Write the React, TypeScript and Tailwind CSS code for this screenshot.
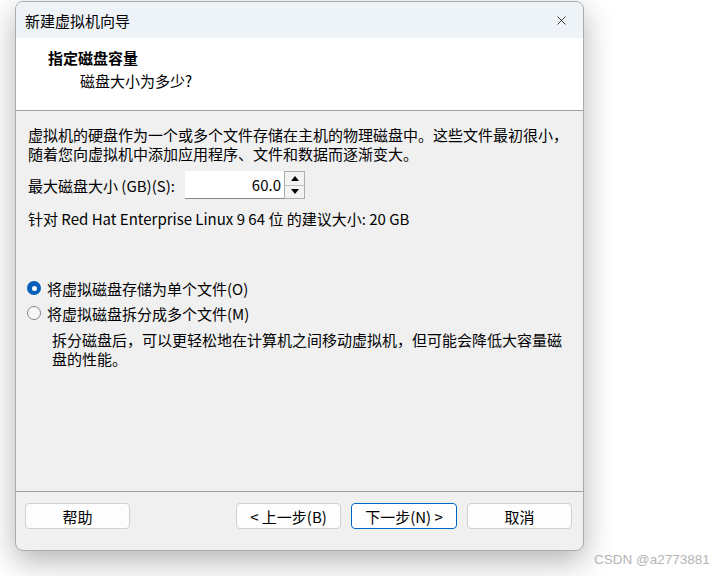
import { X } from 'lucide-react';

function Radio({ checked }: { checked: boolean }) {
  if (checked) {
    return (
      <span className="w-[14px] h-[14px] rounded-full bg-[#005fb8] flex items-center justify-center shrink-0">
        <span className="w-[5px] h-[5px] rounded-full bg-white" />
      </span>
    );
  }
  return <span className="w-[14px] h-[14px] rounded-full border border-[#858585] bg-[#f7f7f7] shrink-0" />;
}

function Button({ label, primary }: { label: string; primary?: boolean }) {
  return (
    <button
      className={`h-[26px] rounded-[4px] bg-[#fdfdfd] text-[15px] leading-none text-black flex items-center justify-center ${
        primary ? 'w-[106px] border border-[#0067c0]' : 'w-[105px] border border-[#d0d0d0]'
      }`}
    >
      {label}
    </button>
  );
}

export default function App() {
  return (
    <div className="relative w-[724px] h-[576px] bg-white overflow-hidden font-['Noto_Sans_CJK_SC','Noto_Sans',sans-serif] text-black">
      {/* Wizard window */}
      <div className="ml-[15px] mt-[1px] w-[569px] h-[550px] flex flex-col border border-[#ababab] rounded-[8px] overflow-hidden bg-[#f0f0f0] shadow-[0_10px_30px_rgba(0,0,0,0.3)]">
        {/* Title bar */}
        <div className="h-[36px] shrink-0 bg-[#eef3f8] flex items-center justify-between pl-[9px] pr-[14px]">
          <span className="text-[15px] leading-none">新建虚拟机向导</span>
          <X className="w-[15px] h-[15px] text-black" strokeWidth={1.2} />
        </div>

        {/* Header */}
        <div className="h-[72px] shrink-0 bg-white border-b border-[#a0a0a0] box-content">
          <div className="pl-[32px] pt-[10px] text-[15px] leading-[19px] font-bold">指定磁盘容量</div>
          <div className="pl-[64px] mt-[4px] text-[15px] leading-[19px]">磁盘大小为多少?</div>
        </div>

        {/* Content */}
        <div className="flex-1 pl-[12px] pt-[14px] text-[15px]">
          <p className="leading-[19px]">
            虚拟机的硬盘作为一个或多个文件存储在主机的物理磁盘中。这些文件最初很小，
            <br />
            随着您向虚拟机中添加应用程序、文件和数据而逐渐变大。
          </p>

          <div className="mt-[8px] flex items-center h-[28px]">
            <span className="w-[157px] leading-[19px]">最大磁盘大小 (GB)(S):</span>
            <div className="w-[99px] h-[28px] bg-white border-b border-[#868686] flex items-center justify-end pr-[3px]">
              <span className="leading-none">60.0</span>
            </div>
            <div className="w-[21px] h-[28px] border border-[#adadad] bg-[#f3f3f3] flex flex-col">
              <div className="flex-1 border-b border-[#c4c4c4] flex items-center justify-center">
                <svg width="8" height="5" viewBox="0 0 8 5">
                  <path d="M0 5 L4 0 L8 5 Z" fill="#000" />
                </svg>
              </div>
              <div className="flex-1 flex items-center justify-center">
                <svg width="8" height="5" viewBox="0 0 8 5">
                  <path d="M0 0 L8 0 L4 5 Z" fill="#000" />
                </svg>
              </div>
            </div>
          </div>

          <p className="mt-[10px] leading-[19px]">针对 Red Hat Enterprise Linux 9 64 位 的建议大小: 20 GB</p>

          <div className="mt-[50px] flex items-center h-[20px] -ml-[1px] gap-[6px]">
            <Radio checked />
            <span className="leading-[19px]">将虚拟磁盘存储为单个文件(O)</span>
          </div>
          <div className="mt-[5px] flex items-center h-[20px] -ml-[1px] gap-[6px]">
            <Radio checked={false} />
            <span className="leading-[19px]">将虚拟磁盘拆分成多个文件(M)</span>
          </div>
          <p className="mt-[7px] ml-[24px] leading-[19px]">
            拆分磁盘后，可以更轻松地在计算机之间移动虚拟机，但可能会降低大容量磁
            <br />
            盘的性能。
          </p>
        </div>

        {/* Footer */}
        <div className="h-[47px] shrink-0 border-t border-[#a0a0a0] box-content flex items-start pt-[11px] pl-[9px] pr-[11px]">
          <Button label="帮助" />
          <div className="ml-auto flex gap-[10px]">
            <Button label="< 上一步(B)" />
            <Button label="下一步(N) >" primary />
            <Button label="取消" />
          </div>
        </div>
      </div>

      <span className="absolute left-[594px] top-[553px] text-[13.5px] leading-none text-[#b4b4b4] font-['Liberation_Sans',Arial,sans-serif]">
        CSDN @a2773881
      </span>
    </div>
  );
}
